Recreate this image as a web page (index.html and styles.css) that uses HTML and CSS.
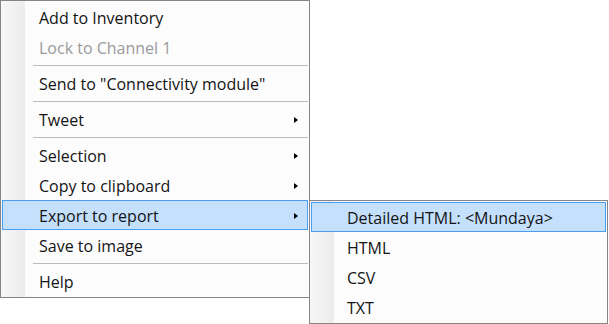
FILE: index.html
```html
<!DOCTYPE html>
<html>
<head>
<meta charset="utf-8">
<link rel="stylesheet" href="styles.css">
</head>
<body>
<div class="stage">
  <div class="menu main">
    <div class="item">Add to Inventory</div>
    <div class="item disabled">Lock to Channel 1</div>
    <div class="sep"></div>
    <div class="item">Send to "Connectivity module"</div>
    <div class="sep"></div>
    <div class="item">Tweet<span class="arrow"></span></div>
    <div class="sep"></div>
    <div class="item">Selection<span class="arrow"></span></div>
    <div class="item">Copy to clipboard<span class="arrow"></span></div>
    <div class="item active">Export to report<span class="arrow"></span></div>
    <div class="item">Save to image</div>
    <div class="sep"></div>
    <div class="item">Help</div>
  </div>
  <div class="menu sub">
    <div class="item active">Detailed HTML: &lt;Mundaya&gt;</div>
    <div class="item">HTML</div>
    <div class="item">CSV</div>
    <div class="item">TXT</div>
  </div>
</div>
</body>
</html>
```
FILE: styles.css
```css
html, body {
  margin: 0;
  padding: 0;
  background: #ffffff;
}
.stage {
  position: relative;
  width: 609px;
  height: 324px;
  font-family: "Segoe UI", "Open Sans", "Noto Sans", sans-serif;
  font-size: 16px;
  color: #141414;
}
.menu {
  box-sizing: border-box;
  border: 1px solid #858585;
  padding: 1px;
  background:
    linear-gradient(to right, #f7f7f7, #ececec) no-repeat 0 0 / 24px 100%,
    #fcfcfc;
  background-origin: padding-box;
}
.main {
  width: 310px;
  height: 298px;
}
.sub {
  position: absolute;
  left: 309px;
  top: 200px;
  width: 299px;
  height: 124px;
}
.item {
  box-sizing: border-box;
  height: 30px;
  display: flex;
  align-items: center;
  padding-left: 35px;
  padding-right: 9px;
  padding-top: 1px;
  white-space: nowrap;
  border: 1px solid transparent;
}
.main .item {
  padding-left: 36px;
}
.item.disabled {
  color: #9b9b9b;
}
.item.active {
  background: #c4e0fc;
  border-color: #4a9ef0;
}
.sep {
  height: 1px;
  margin: 3px 0 2px 31px;
  background: #bdbdbd;
}
.arrow {
  margin-left: auto;
  width: 0;
  height: 0;
  border-left: 4px solid #000;
  border-top: 3.5px solid transparent;
  border-bottom: 3.5px solid transparent;
}
```
